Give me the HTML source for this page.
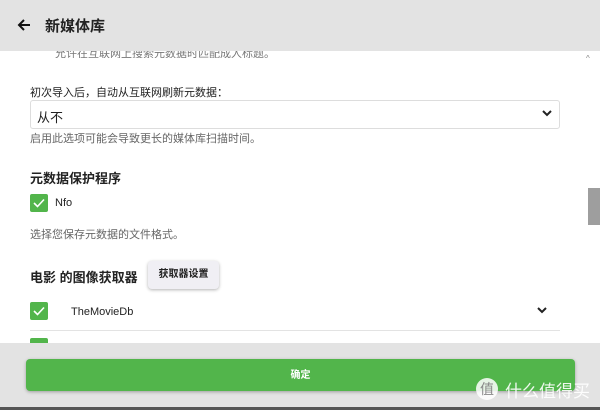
<html><head><style>
body{margin:0;width:600px;height:410px;position:relative;overflow:hidden;background:#fff;font-family:"Liberation Sans","Noto Sans CJK SC",sans-serif;color:#222}
.a{position:absolute}
.cb{position:absolute;width:18px;height:18px;background:#52b54b;border-radius:2px}
.cb svg{position:absolute;left:2px;top:2px}
</style></head><body>
<div class="a" style="left:0;top:0;width:600px;height:51px;background:#e3e3e3"></div>
<svg class="a" style="left:16px;top:17px" width="16" height="16" viewBox="0 0 16 16"><path d="M14 8H3M8 3L3 8l5 5" stroke="#111" stroke-width="2" fill="none"/></svg>
<div class="a" style="left:45px;top:15px;font-size:15px;font-weight:bold">新媒体库</div>
<div class="a" style="left:55px;top:51px;font-size:11px;color:#777;height:7px;overflow:hidden;line-height:6px">允许在互联网上搜索元数据时匹配成人标题。</div>
<div class="a" style="left:586px;top:54px;font-size:8px;color:#888">^</div>
<div class="a" style="left:30px;top:84px;font-size:11px">初次导入后，自动从互联网刷新元数据：</div>
<div class="a" style="left:30px;top:100px;width:528px;height:27px;border:1px solid #ddd;border-radius:3px"></div>
<div class="a" style="left:37px;top:107px;font-size:13px">从不</div>
<svg class="a" style="left:541px;top:109px" width="12" height="9" viewBox="0 0 12 9"><path d="M2 2l4 4 4-4" stroke="#222" stroke-width="2" fill="none"/></svg>
<div class="a" style="left:30px;top:130px;font-size:11px;color:#666">启用此选项可能会导致更长的媒体库扫描时间。</div>
<div class="a" style="left:30px;top:168px;font-size:13px;font-weight:bold">元数据保护程序</div>
<div class="cb" style="left:30px;top:194px"><svg width="14" height="14" viewBox="0 0 14 14"><path d="M2 7l3.5 3.5L12 3.5" stroke="#fff" stroke-width="1.6" fill="none"/></svg></div>
<div class="a" style="left:55px;top:197px;font-size:11px">Nfo</div>
<div class="a" style="left:30px;top:226px;font-size:11px;color:#666">选择您保存元数据的文件格式。</div>
<div class="a" style="left:30px;top:267px;font-size:13px;font-weight:bold">电影 的图像获取器</div>
<div class="a" style="left:148px;top:261px;width:71px;height:28px;background:#f0eff4;border-radius:4px;box-shadow:0 1px 3px rgba(0,0,0,.3);font-size:10px;font-weight:bold;text-align:center;line-height:28px">获取器设置</div>
<div class="cb" style="left:30px;top:302px"><svg width="14" height="14" viewBox="0 0 14 14"><path d="M2 7l3.5 3.5L12 3.5" stroke="#fff" stroke-width="1.6" fill="none"/></svg></div>
<div class="a" style="left:71px;top:306px;font-size:11px">TheMovieDb</div>
<svg class="a" style="left:536px;top:306px" width="12" height="9" viewBox="0 0 12 9"><path d="M2 2l4 4 4-4" stroke="#222" stroke-width="2" fill="none"/></svg>
<div class="a" style="left:30px;top:330px;width:530px;height:1px;background:#e3e3e3"></div>
<div class="cb" style="left:30px;top:338px"></div>
<div class="a" style="left:588px;top:188px;width:12px;height:37px;background:#9e9e9e"></div>
<div class="a" style="left:0;top:343px;width:600px;height:64px;background:#e3e3e3"></div>
<div class="a" style="left:26px;top:359px;width:549px;height:32px;background:#52b54b;border-radius:4px;box-shadow:0 1px 3px rgba(0,0,0,.3);color:#fff;font-size:10px;font-weight:bold;text-align:center;line-height:34px">确定</div>
<div class="a" style="left:0;top:407px;width:600px;height:3px;background:#555"></div>
<div class="a" style="left:476px;top:378px;width:22px;height:22px;border-radius:50%;background:rgba(255,255,255,.85);color:#888;font-size:14px;text-align:center;line-height:22px">值</div>
<div class="a" style="left:505px;top:377px;font-size:17px;color:rgba(255,255,255,.9)">什么值得买</div>
</body></html>
